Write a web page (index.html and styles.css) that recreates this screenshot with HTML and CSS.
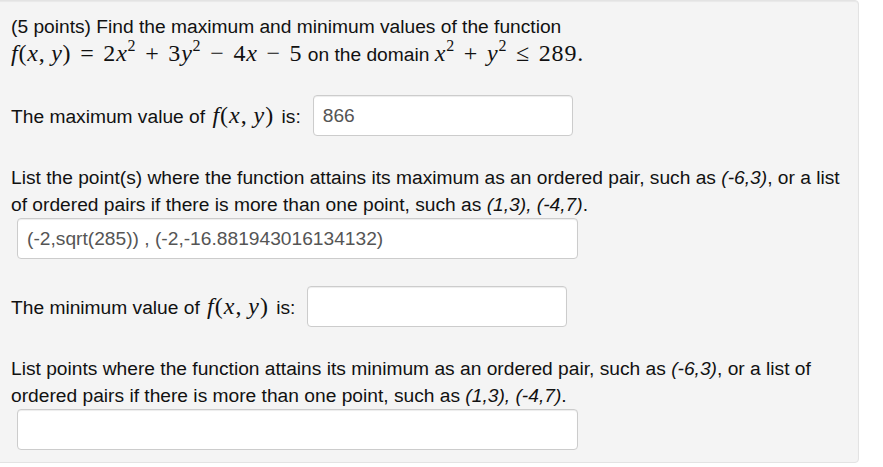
FILE: index.html
```html
<!DOCTYPE html>
<html lang="en">
<head>
    <meta charset="UTF-8">
    <title>Problem</title>
    <link rel="stylesheet" href="styles.css">
</head>
<body>
    <div class="well">
        <p class="text">
            (5 points) Find the maximum and minimum values of the function<br>
            <span class="math"><i>f</i>(<i>x</i>,&thinsp;<i>y</i>) <span class="op">=</span> 2<i>x</i><sup>2</sup> <span class="op">+</span> 3<i>y</i><sup>2</sup> <span class="op">&minus;</span> 4<i>x</i> <span class="op">&minus;</span> 5</span> on the domain <span class="math"><i>x</i><sup>2</sup> <span class="op">+</span> <i>y</i><sup>2</sup> <span class="op">&le;</span> 289.</span>
        </p>

        <div class="answer-row">
            <span class="label">The maximum value of <span class="math"><i>f</i>(<i>x</i>,&thinsp;<i>y</i>)</span> is:</span>
            <input class="answer" type="text" value="866">
        </div>

        <p class="text">
            List the point(s) where the function attains its maximum as an ordered pair, such as <em>(-6,3)</em>, or a list of ordered pairs if there is more than one point, such as <em>(1,3), (-4,7)</em>.
        </p>
        <input class="answer wide" type="text" value="(-2,sqrt(285)) , (-2,-16.881943016134132)">

        <div class="answer-row">
            <span class="label">The minimum value of <span class="math"><i>f</i>(<i>x</i>,&thinsp;<i>y</i>)</span> is:</span>
            <input class="answer" type="text" value="">
        </div>

        <p class="text">
            List points where the function attains its minimum as an ordered pair, such as <em>(-6,3)</em>, or a list of ordered pairs if there is more than one point, such as <em>(1,3), (-4,7)</em>.
        </p>
        <input class="answer wide" type="text" value="">
    </div>
</body>
</html>
```

FILE: styles.css
```css
* {
    margin: 0;
    padding: 0;
    box-sizing: border-box;
}

html, body {
    background: #fff;
}

body {
    font-family: 'Liberation Sans', Arial, sans-serif;
    font-size: 19.2px;
    color: #111;
    overflow: hidden;
}

.well {
    width: 865px;
    height: 463px;
    margin-left: -6px;
    padding: 12px 0 0 16px;
    background: #f4f4f4;
    border: 1px solid #e3e3e3;
    border-radius: 4px;
    box-shadow: inset 0 1px 1px rgba(0,0,0,0.05);
}

.text {
    line-height: 27px;
    width: 840px;
}

.text em {
    font-style: italic;
}

.math {
    font-family: 'Liberation Serif', 'Times New Roman', serif;
    font-size: 24px;
    letter-spacing: 0.8px;
    white-space: nowrap;
}

.math i {
    font-style: italic;
}

.math .op {
    margin: 0 2px;
}

.math sup {
    font-size: 16px;
    vertical-align: 10px;
    line-height: 0;
}

.label .math {
    margin: 0 2px;
    letter-spacing: 1px;
}

.answer-row {
    display: flex;
    align-items: center;
    gap: 12px;
    margin-top: 27px;
    margin-bottom: 28px;
}

.answer {
    display: block;
    height: 41px;
    width: 260px;
    padding: 0 9px;
    font-family: 'Liberation Sans', Arial, sans-serif;
    font-size: 19.2px;
    color: #555;
    background: #fff;
    border: 1px solid #ccc;
    border-radius: 4px;
    box-shadow: inset 0 1px 1px rgba(0,0,0,0.075);
}

.answer.wide {
    width: 561px;
    margin-left: 6px;
}
```
